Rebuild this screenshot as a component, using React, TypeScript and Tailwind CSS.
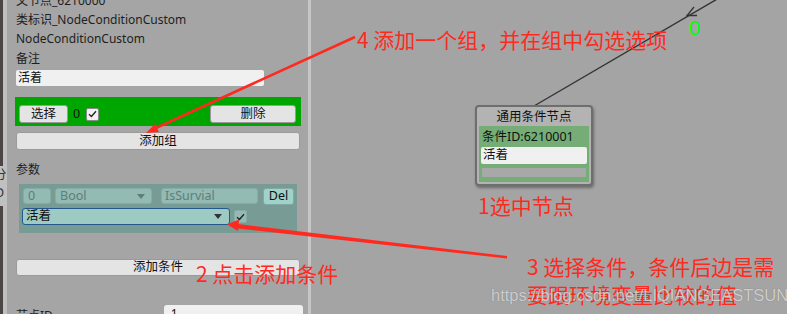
import React from "react";

const font = { fontFamily: '"Noto Sans", "Noto Sans CJK SC", sans-serif' };

function Btn({ children, className = "" }: { children: React.ReactNode; className?: string }) {
  return (
    <div
      className={`flex shrink-0 items-center justify-center rounded-[3px] border border-[#9a9a9a] bg-[#e4e4e4] text-[12.5px] text-[#111] leading-none ${className}`}
    >
      {children}
    </div>
  );
}

function Check({ className = "" }: { className?: string }) {
  return (
    <div className={`flex h-[13px] w-[13px] shrink-0 items-center justify-center rounded-[2px] border border-[#8a8a8a] bg-[#f2f2f2] ${className}`}>
      <svg width="9" height="8" viewBox="0 0 9 8">
        <path d="M1 4.2 L3.4 6.5 L8 1.2" fill="none" stroke="#222" strokeWidth="1.3" />
      </svg>
    </div>
  );
}

export default function App() {
  return (
    <div className="relative flex h-[314px] w-[787px] overflow-hidden bg-[#a5a5a5] text-[#1a1a1a]" style={font}>
      {/* left edge strips */}
      <div className="w-[3px] shrink-0 bg-[#4b4643]" />
      <div className="w-[4px] shrink-0 bg-[#bfbfbf]" />

      {/* inspector panel */}
      <div className="flex w-[301px] shrink-0 flex-col overflow-hidden pl-[9px]">
        <div className="mt-[-9px] h-[19px] shrink-0 text-[12px] leading-[19px] text-[#1e1e1e]">文节点_6210000</div>
        <div className="h-[19px] shrink-0 text-[12px] leading-[19px] text-[#1e1e1e]">类标识_NodeConditionCustom</div>
        <div className="h-[19px] shrink-0 text-[12px] leading-[19px] text-[#1e1e1e]">NodeConditionCustom</div>
        <div className="h-[21px] shrink-0 text-[12px] leading-[21px] text-[#1e1e1e]">备注</div>
        <div className="mt-[1px] flex h-[16px] w-[248px] shrink-0 items-center rounded-[2px] bg-[#f0f0f0] pl-[2px] text-[12px] leading-none text-[#111]">
          活着
        </div>

        {/* green group */}
        <div className="ml-[-1px] mt-[11px] flex h-[29px] w-[286px] shrink-0 items-center bg-[#00a600] pb-[3px] pl-[4px] pr-[5px] pt-[8px]">
          <Btn className="h-[18px] w-[49px]">选择</Btn>
          <span className="ml-[5px] text-[12.5px] leading-none text-[#111]">0</span>
          <Check className="ml-[6px]" />
          <Btn className="ml-auto h-[18px] w-[86px]">删除</Btn>
        </div>

        <Btn className="mt-[6px] h-[18px] w-[284px]">添加组</Btn>

        <div className="mt-[10px] h-[20px] shrink-0 text-[12px] leading-[20px] text-[#1e1e1e]">参数</div>

        {/* param box */}
        <div className="ml-[3px] mt-[4px] flex h-[49px] w-[278px] shrink-0 flex-col bg-[#789b95] pt-[4px]">
          <div className="flex h-[16px] shrink-0 items-center pl-[4px]">
            <div className="flex h-[16px] w-[28px] items-center rounded-[3px] border border-[#86aca5] bg-[#93bab3] pl-[4px] text-[12.5px] leading-none text-[#5f7e79]">
              0
            </div>
            <div className="ml-[4px] flex h-[16px] w-[97px] items-center justify-between rounded-[3px] border border-[#86aca5] bg-[#93bab3] pl-[4px] pr-[6px] text-[12.5px] leading-none text-[#5f7e79]">
              Bool
              <svg width="8" height="5" viewBox="0 0 8 5">
                <path d="M0 0 L8 0 L4 5 Z" fill="#5f7e79" />
              </svg>
            </div>
            <div className="ml-[9px] flex h-[16px] w-[97px] items-center rounded-[3px] border border-[#86aca5] bg-[#93bab3] pl-[3px] text-[12.5px] leading-none text-[#5f7e79]">
              IsSurvial
            </div>
            <div className="ml-[5px] flex h-[17px] w-[31px] items-center justify-center rounded-[3px] border border-[#82aaa2] bg-[#a0d2c9] text-[12.5px] leading-none text-[#111]">
              Del
            </div>
          </div>
          <div className="mt-[4px] flex h-[17px] shrink-0 items-center pl-[3px]">
            <div className="flex h-[17px] w-[208px] items-center justify-between rounded-[3px] border border-[#24578a] bg-[#9dcac3] pl-[3px] pr-[7px] text-[12.5px] leading-none text-[#111]">
              活着
              <svg width="8" height="5" viewBox="0 0 8 5">
                <path d="M0 0 L8 0 L4 5 Z" fill="#333" />
              </svg>
            </div>
            <div className="ml-[4px] flex h-[13px] w-[13px] items-center justify-center rounded-[2px] border border-[#86aca5] bg-[#93bab3]">
              <svg width="9" height="8" viewBox="0 0 9 8">
                <path d="M1 4.2 L3.4 6.5 L8 1.2" fill="none" stroke="#222" strokeWidth="1.3" />
              </svg>
            </div>
          </div>
        </div>

        <Btn className="mt-[26px] h-[17px] w-[284px]">添加条件</Btn>

        <div className="mt-[29px] flex h-[20px] shrink-0 items-start">
          <div className="mt-[1px] w-[148px] text-[12px] leading-[19px] text-[#1e1e1e]">节点ID</div>
          <div className="flex h-[18px] w-[139px] items-start rounded-[3px] bg-[#f0f0f0] pl-[3px] text-[12px] leading-[18px] text-[#111]">
            -1
          </div>
        </div>
      </div>

      {/* divider */}
      <div className="w-[3px] shrink-0 bg-[#c6c6c6]" />

      {/* canvas */}
      <div className="relative flex-1 bg-[#a4a4a4]">
        <svg className="absolute left-0 top-0" width="476" height="314">
          <line x1="223" y1="106" x2="408" y2="-2" stroke="#333" strokeWidth="1.4" />
          <path d="M383 7 L376 15.5 L386 15.5" fill="none" stroke="#333" strokeWidth="1.3" />
        </svg>
        <div className="absolute left-[378px] top-[16px] text-[20px] leading-[24px] text-[#00ff00]" style={{ fontFamily: '"Liberation Sans", sans-serif' }}>
          0
        </div>

        {/* node */}
        <div className="absolute left-[164px] top-[105px] flex h-[81px] w-[118px] flex-col rounded-[4px] border-2 border-[#6e6e6e] bg-[#b3b3b3] px-[2px] pb-[2px] shadow-[1px_2px_3px_rgba(0,0,0,0.35)]">
          <div className="h-[19px] shrink-0 text-center text-[12.5px] leading-[20px] text-[#111]">通用条件节点</div>
          <div className="flex flex-1 flex-col bg-[#76ad76] px-[2px]">
            <div className="h-[21px] shrink-0 pl-[1px] text-[12.5px] leading-[21px] text-[#111]">条件ID:6210001</div>
            <div className="flex h-[17px] shrink-0 items-center rounded-[2px] bg-[#f0f0f0] pl-[2px] text-[12.5px] leading-none text-[#111]">
              活着
            </div>
            <div className="mx-[1px] mt-[4px] h-[9px] shrink-0 bg-[#a8a8a8]" />
          </div>
        </div>
      </div>

      {/* small partially visible panel on the far left */}
      <div className="absolute left-0 top-[166px] flex h-[40px] w-[7px] flex-col overflow-hidden bg-[#c0c0c0] text-[12.5px] leading-[18px] text-[#333]">
        <span className="ml-[-6px]">分</span>
        <span className="ml-[-5px]">D</span>
      </div>

      {/* annotations */}
      <svg className="pointer-events-none absolute left-0 top-0" width="787" height="314">
        <line x1="355" y1="37" x2="156" y2="128" stroke="#ff2a1f" strokeWidth="2.6" />
        <path d="M146 133 L155 124 L159 132 Z" fill="#ff2a1f" />
        <path d="M507 256 L507 258.5 L238 228.5 L238 224 Z" fill="#ff2a1f" />
        <path d="M227 224.5 L239 219.5 L238 231 Z" fill="#ff2a1f" />
      </svg>
      <div className="pointer-events-none absolute left-[357px] top-[29px] whitespace-nowrap text-[21px] leading-[21px] text-[#ff2a1f]" style={{ fontFamily: '"Noto Sans CJK SC", sans-serif' }}>
        4 添加一个组，并在组中勾选选项
      </div>
      <div className="pointer-events-none absolute left-[478px] top-[195px] whitespace-nowrap text-[21px] leading-[21px] text-[#ff2a1f]" style={{ fontFamily: '"Noto Sans CJK SC", sans-serif' }}>
        1选中节点
      </div>
      <div className="pointer-events-none absolute left-[527px] top-[252px] whitespace-nowrap text-[21px] leading-[28px] text-[#ff2a1f]" style={{ fontFamily: '"Noto Sans CJK SC", sans-serif' }}>
        <div>3 选择条件，条件后边是需</div>
        <div>要跟环境变量比较的值</div>
      </div>
      <div className="pointer-events-none absolute left-[196px] top-[263px] whitespace-nowrap text-[21px] leading-[21px] text-[#ff2a1f]" style={{ fontFamily: '"Noto Sans CJK SC", sans-serif' }}>
        2 点击添加条件
      </div>
      <div
        className="pointer-events-none absolute left-[491px] top-[285px] whitespace-nowrap text-[16.5px] leading-[20px] text-[#e6e6e6]/80"
        style={{ fontFamily: '"Liberation Sans", sans-serif', textShadow: "0 0 1px rgba(0,0,0,0.35)" }}
      >
        https://blog.csdn.net/LIQIANGEASTSUN
      </div>
    </div>
  );
}
